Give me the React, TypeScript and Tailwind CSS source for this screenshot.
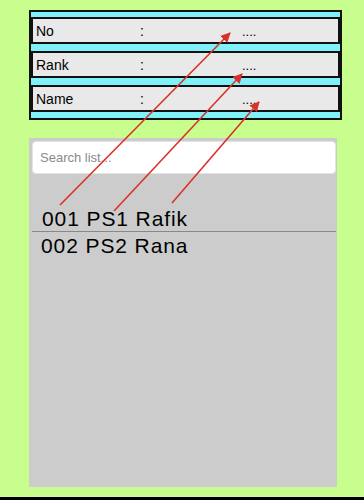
import React from "react";

const rows = [
  { label: "No" },
  { label: "Rank" },
  { label: "Name" },
];

const arrows = [
  { x1: 60, y1: 205, x2: 230, y2: 33 },
  { x1: 114, y1: 211, x2: 242, y2: 74 },
  { x1: 172, y1: 203, x2: 259, y2: 102 },
];

export default function App() {
  return (
    <div
      className="relative w-[364px] h-[500px] bg-[#c8fe8e] flex flex-col overflow-hidden"
      style={{ fontFamily: '"Liberation Sans", Arial, sans-serif' }}
    >
      <div className="ml-[29px] mt-[10px] w-[313px] border-2 border-[#111] bg-[#80f1f8] pt-[5px] pb-[6px] flex flex-col gap-[7px]">
        {rows.map((r) => (
          <div
            key={r.label}
            className="h-[27px] border-2 border-[#111] bg-[#e9e9e9] flex items-center pl-[3px] pt-[2px] text-[14px] text-black"
          >
            <span className="w-[104px]">{r.label}</span>
            <span className="w-[102px]">:</span>
            <span className="text-[13px] pt-[1px]">....</span>
          </div>
        ))}
      </div>

      <div className="ml-[29px] mt-[18px] w-[308px] h-[349px] bg-[#cccccc] pt-[3px] pl-[3px] pr-[1px] flex flex-col">
        <div className="h-[33px] bg-white rounded-[4px] border border-[#e4e4e4] flex items-center pl-[7px] text-[13px] text-[#8a8a8a]">
          Search list...
        </div>
        <div className="mt-[33px] h-[25px] leading-[24px] border-b border-[#888888] pl-[10px] text-[21px] tracking-[0.9px] text-black">
          001 PS1 Rafik
        </div>
        <div className="h-[27px] leading-[27px] pl-[9px] text-[21px] tracking-[0.9px] text-black">
          002 PS2 Rana
        </div>
      </div>

      <div className="mt-auto h-[3px] bg-black" />

      <svg
        className="absolute inset-0 pointer-events-none"
        width="364"
        height="500"
        viewBox="0 0 364 500"
      >
        <defs>
          <marker
            id="ah"
            viewBox="0 0 10 10"
            refX="9"
            refY="5"
            markerWidth="10"
            markerHeight="10"
            markerUnits="userSpaceOnUse"
            orient="auto"
          >
            <path d="M0 0 L10 5 L0 10 z" fill="#d8322a" />
          </marker>
        </defs>
        {arrows.map((a, i) => (
          <line
            key={i}
            x1={a.x1}
            y1={a.y1}
            x2={a.x2}
            y2={a.y2}
            stroke="#d8322a"
            strokeWidth="1.6"
            markerEnd="url(#ah)"
          />
        ))}
      </svg>
    </div>
  );
}
